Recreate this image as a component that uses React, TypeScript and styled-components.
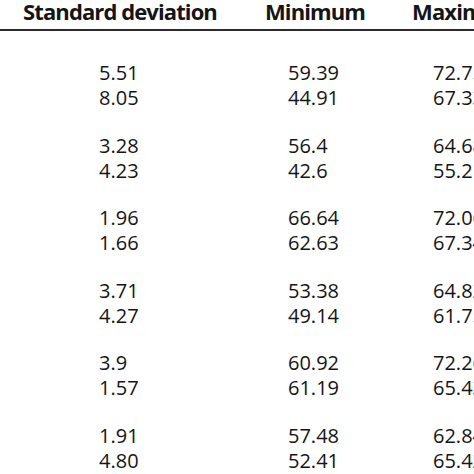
import styled, { createGlobalStyle } from 'styled-components'

const GlobalStyle = createGlobalStyle`
  html, body {
    margin: 0;
    padding: 0;
    background: #fff;
    overflow: hidden;
  }
`

const Table = styled.div`
  width: 539px;
  font-family: 'Open Sans', 'DejaVu Sans', sans-serif;
  color: #151515;
`

const Grid = styled.div`
  display: grid;
  grid-template-columns: 240px 150px 149px;
`

const HeadRow = styled(Grid)`
  border-bottom: 2px solid #2b2b2b;
`

const HeadCell = styled.div`
  font-size: 22px;
  font-weight: 700;
  line-height: 22px;
  padding-bottom: 7px;
  text-align: center;
  letter-spacing: -0.9px;
  white-space: nowrap;
`

const Body = styled.div`
  display: flex;
  flex-direction: column;
  gap: 22.5px;
  padding-top: 29px;
`

const Cell = styled.div<{ $indent: number }>`
  padding-left: ${(p) => p.$indent}px;
  font-size: 20px;
  line-height: 25px;
  white-space: nowrap;
`

const Value = styled.div``

const indents = [99, 48, 43]

const groups: string[][][] = [
  [['5.51', '8.05'], ['59.39', '44.91'], ['72.75', '67.33']],
  [['3.28', '4.23'], ['56.4', '42.6'], ['64.68', '55.21']],
  [['1.96', '1.66'], ['66.64', '62.63'], ['72.06', '67.34']],
  [['3.71', '4.27'], ['53.38', '49.14'], ['64.82', '61.75']],
  [['3.9', '1.57'], ['60.92', '61.19'], ['72.26', '65.43']],
  [['1.91', '4.80'], ['57.48', '52.41'], ['62.84', '65.42']],
]

export default function App() {
  return (
    <>
      <GlobalStyle />
      <Table>
        <HeadRow>
          <HeadCell>Standard deviation</HeadCell>
          <HeadCell>Minimum</HeadCell>
          <HeadCell>Maximum</HeadCell>
        </HeadRow>
        <Body>
          {groups.map((group, i) => (
            <Grid key={i}>
              {group.map((values, j) => (
                <Cell key={j} $indent={indents[j]}>
                  {values.map((v) => (
                    <Value key={v}>{v}</Value>
                  ))}
                </Cell>
              ))}
            </Grid>
          ))}
        </Body>
      </Table>
    </>
  )
}
